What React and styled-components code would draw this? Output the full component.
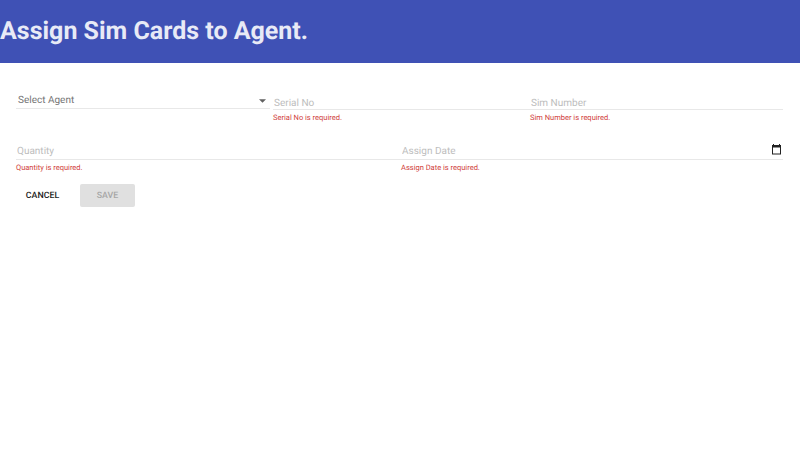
import React from "react";
import styled, { createGlobalStyle } from "styled-components";

const Global = createGlobalStyle`
  html, body { margin: 0; padding: 0; background: #fff; }
  body { font-family: Roboto, "Liberation Sans", sans-serif; text-rendering: geometricPrecision; }
`;
const Header = styled.header`
  height: 63px;
  background: #3f51b5;
  display: flex;
  align-items: center;
`;
const Title = styled.h1`
  margin: 0;
  font-size: 25px;
  line-height: 28px;
  font-weight: 700;
  color: #e8eaf6;
`;
const Form = styled.form`
  padding: 0 17px 0 16px;
  display: flex;
  flex-direction: column;
`;
const Row = styled.div`
  box-sizing: border-box;
  display: grid;
  grid-template-columns: ${(p) => p.$cols};
  height: ${(p) => p.$height}px;
  padding-top: ${(p) => p.$top}px;
`;
const Field = styled.div`
  display: flex;
  flex-direction: column;
  min-width: 0;
`;
const Control = styled.div`
  height: ${(p) => p.$height}px;
  display: flex;
  align-items: center;
  justify-content: space-between;
  box-sizing: border-box;
  padding: ${(p) => p.$inset}px 1px 0 1px;
  border-bottom: 1px solid #e8e8e8;
`;
const Placeholder = styled.input`
  border: 0;
  outline: 0;
  padding: 0;
  flex: 1;
  min-width: 0;
  background: transparent;
  font: 400 10px Roboto, sans-serif;
  text-rendering: geometricPrecision;
  color: #333;
  &::placeholder { color: #bdbdbd; opacity: 1; }
`;
const SelectBox = styled.div`
  height: 23px;
  margin-right: 3px;
  display: flex;
  align-items: center;
  justify-content: space-between;
  box-sizing: border-box;
  padding: 6px 4px 0 2px;
  border-bottom: 1px solid #e8e8e8;
  font-size: 10px;
  color: #757575;
  svg { margin-top: 1px; }
`;
const Error = styled.div`
  margin-top: 2px;
  font-size: 7.5px;
  line-height: 11px;
  color: #d0403c;
`;
const Actions = styled.div`
  display: flex;
  align-items: center;
  gap: 11px;
`;
const Button = styled.button`
  width: ${(p) => p.$width}px;
  height: 23px;
  padding: 0;
  border: 0;
  border-radius: 2px;
  background: ${(p) => (p.disabled ? "#e0e0e0" : "transparent")};
  color: ${(p) => (p.disabled ? "#a6a6a6" : "#1a1a1a")};
  font: 500 8.8px Roboto, sans-serif;
  text-rendering: geometricPrecision;
`;
const CalendarGlyph = styled.svg`
  margin-top: -4px;
`;

const Caret = () => (
  <svg width="7" height="4" viewBox="0 0 8 4">
    <path d="M0 0h8L4 4z" fill="#616161" />
  </svg>
);
const CalendarIcon = () => (
  <CalendarGlyph width="11" height="11" viewBox="0 0 11 11">
    <path d="M2.5 0v1.5M8.5 0v1.5" stroke="#222" strokeWidth="1" />
    <rect x="1.5" y="1.5" width="8" height="8.5" fill="none" stroke="#222" strokeWidth="1" />
    <rect x="1.5" y="1.5" width="8" height="2" fill="#222" />
  </CalendarGlyph>
);

const TextField = ({ label, error, icon, height, inset }) => (
  <Field>
    <Control $height={height} $inset={inset}>
      <Placeholder placeholder={label} readOnly />
      {icon}
    </Control>
    <Error>{error}</Error>
  </Field>
);

export default function App() {
  return (
    <>
      <Global />
      <Header>
        <Title>Assign Sim Cards to Agent.</Title>
      </Header>
      <Form>
        <Row $cols="257px 257px 253px" $height={77} $top={23}>
          <Field>
            <SelectBox>
              Select Agent
              <Caret />
            </SelectBox>
          </Field>
          <TextField label="Serial No" error="Serial No is required." height={24} inset={11} />
          <TextField label="Sim Number" error="Sim Number is required." height={24} inset={11} />
        </Row>
        <Row $cols="385px 382px" $height={44} $top={0}>
          <TextField label="Quantity" error="Quantity is required." height={20} inset={3} />
          <TextField label="Assign Date" error="Assign Date is required." icon={<CalendarIcon />} height={20} inset={3} />
        </Row>
        <Actions>
          <Button type="button" $width={53}>CANCEL</Button>
          <Button type="button" disabled $width={55}>SAVE</Button>
        </Actions>
      </Form>
    </>
  );
}
